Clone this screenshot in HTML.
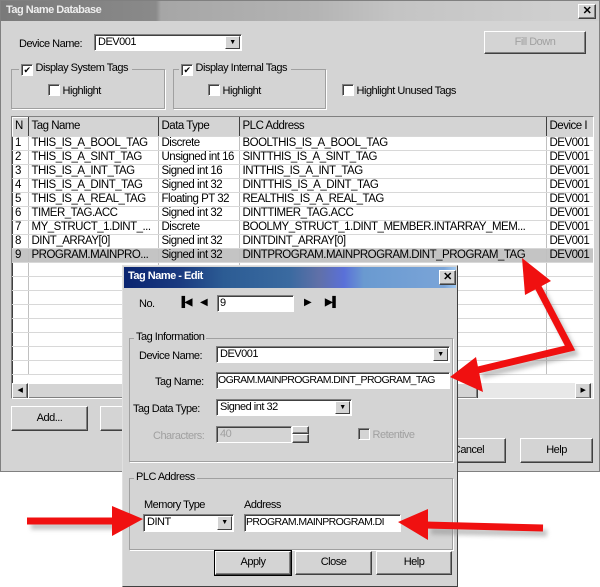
<!DOCTYPE html>
<html><head><style>
*{box-sizing:border-box;margin:0;padding:0}
body{width:600px;height:587px;background:#fff;position:relative;overflow:hidden;font-family:"Liberation Sans",sans-serif;font-size:11px;color:#000;letter-spacing:-0.5px}
.a{position:absolute}
.win{background:#d4d4d4}
.in{background:#fff;border:1px solid;border-color:#808080 #fff #fff #808080;box-shadow:inset 1px 1px 0 #404040}
.btn{background:#d4d4d4;border:1px solid;border-color:#fff #404040 #404040 #fff;box-shadow:inset -1px -1px 0 #808080;text-align:center}
.grp{border:1px solid #a0a0a0;box-shadow:1px 1px 0 #fff}
.cb{width:12px;height:12px;background:#fff;border:1px solid;border-color:#808080 #fff #fff #808080;box-shadow:inset 1px 1px 0 #404040;font-size:9px;line-height:10px;text-align:center}
.dd{position:absolute;right:1px;top:1px;bottom:1px;width:15px;background:#d4d4d4;border:1px solid;border-color:#fff #404040 #404040 #fff;font-size:7px;text-align:center;line-height:12px}
.lbl{background:#d4d4d4;padding:0 2px}
table{border-collapse:collapse}
td{height:14px;border-right:1px solid #c0c0c0;border-bottom:1px solid #d8d8d8;padding:0 3px;white-space:nowrap;overflow:hidden;font-size:11.5px;line-height:13px}
.dis{color:#a0a0a0}
</style></head><body>
<div class="a win" style="left:0;top:0;width:600px;height:472px;border:1px solid #808080">
 <div class="a" style="left:0;top:0;width:598px;height:20px;background:linear-gradient(90deg,#7a7a7a 0,#8a8a8a 155px,#a6a6a6 160px,#b4b4b4 315px,#c4c4c4 395px,#cfcfcf 555px);color:#eee;font-weight:bold;padding:3px 5px">Tag Name Database</div>
 <div class="a btn" style="left:577px;top:3px;width:18px;height:15px;font-weight:bold;line-height:12px">✕</div>
 <div class="a" style="left:18px;top:37px">Device Name:</div>
 <div class="a in" style="left:93px;top:33px;width:148px;height:17px;padding:1px 3px">DEV001<div class="dd">▼</div></div>
 <div class="a btn dis" style="left:483px;top:30px;width:102px;height:23px;line-height:20px">Fill Down</div>
 <div class="a grp" style="left:10px;top:68px;width:154px;height:40px"></div>
 <div class="a lbl" style="left:18px;top:61px;padding-right:4px"><span class="cb" style="display:inline-block;vertical-align:-2px">✔</span> Display System Tags</div>
 <div class="a" style="left:47px;top:83px"><span class="cb" style="display:inline-block;vertical-align:-2px"></span> Highlight</div>
 <div class="a grp" style="left:172px;top:68px;width:153px;height:40px"></div>
 <div class="a lbl" style="left:178px;top:61px;padding-right:4px"><span class="cb" style="display:inline-block;vertical-align:-2px">✔</span> Display Internal Tags</div>
 <div class="a" style="left:207px;top:83px"><span class="cb" style="display:inline-block;vertical-align:-2px"></span> Highlight</div>
 <div class="a" style="left:341px;top:83px"><span class="cb" style="display:inline-block;vertical-align:-2px"></span> Highlight Unused Tags</div>
 <div class="a in" style="left:10px;top:115px;width:583px;height:283px;overflow:hidden">
  <table style="width:600px;table-layout:fixed">
   <colgroup><col style="width:16px"><col style="width:130px"><col style="width:81px"><col style="width:307px"><col style="width:66px"></colgroup>
   <tr style="background:#d4d4d4"><td style="height:19px;border-right:1px solid #404040;box-shadow:inset 1px 1px 0 #fff">N</td><td style="border-right:1px solid #404040">Tag Name</td><td style="border-right:1px solid #404040">Data Type</td><td style="border-right:1px solid #404040">PLC Address</td><td>Device I</td></tr>
   <tr><td>1</td><td>THIS_IS_A_BOOL_TAG</td><td>Discrete</td><td>BOOLTHIS_IS_A_BOOL_TAG</td><td>DEV001</td></tr>
   <tr><td>2</td><td>THIS_IS_A_SINT_TAG</td><td>Unsigned int 16</td><td>SINTTHIS_IS_A_SINT_TAG</td><td>DEV001</td></tr>
   <tr><td>3</td><td>THIS_IS_A_INT_TAG</td><td>Signed int 16</td><td>INTTHIS_IS_A_INT_TAG</td><td>DEV001</td></tr>
   <tr><td>4</td><td>THIS_IS_A_DINT_TAG</td><td>Signed int 32</td><td>DINTTHIS_IS_A_DINT_TAG</td><td>DEV001</td></tr>
   <tr><td>5</td><td>THIS_IS_A_REAL_TAG</td><td>Floating PT 32</td><td>REALTHIS_IS_A_REAL_TAG</td><td>DEV001</td></tr>
   <tr><td>6</td><td>TIMER_TAG.ACC</td><td>Signed int 32</td><td>DINTTIMER_TAG.ACC</td><td>DEV001</td></tr>
   <tr><td>7</td><td>MY_STRUCT_1.DINT_...</td><td>Discrete</td><td>BOOLMY_STRUCT_1.DINT_MEMBER.INTARRAY_MEM...</td><td>DEV001</td></tr>
   <tr><td>8</td><td>DINT_ARRAY[0]</td><td>Signed int 32</td><td>DINTDINT_ARRAY[0]</td><td>DEV001</td></tr>
   <tr style="background:#c4c4c4"><td>9</td><td>PROGRAM.MAINPRO...</td><td>Signed int 32</td><td>DINTPROGRAM.MAINPROGRAM.DINT_PROGRAM_TAG</td><td>DEV001</td></tr>
   <tr><td></td><td></td><td></td><td></td><td></td></tr><tr><td></td><td></td><td></td><td></td><td></td></tr><tr><td></td><td></td><td></td><td></td><td></td></tr><tr><td></td><td></td><td></td><td></td><td></td></tr><tr><td></td><td></td><td></td><td></td><td></td></tr><tr><td></td><td></td><td></td><td></td><td></td></tr><tr><td></td><td></td><td></td><td></td><td></td></tr><tr><td></td><td></td><td></td><td></td><td></td></tr>
  </table>
  <div class="a" style="left:0;top:266px;width:581px;height:16px;background:#e8e8e8">
   <div class="a btn" style="left:0;top:0;width:16px;height:16px;font-size:7px;line-height:14px">◀</div>
   <div class="a btn" style="left:16px;top:0;width:450px;height:16px"></div>
   <div class="a btn" style="left:563px;top:0;width:16px;height:16px;font-size:7px;line-height:14px">▶</div>
  </div>
 </div>
 <div class="a btn" style="left:10px;top:405px;width:77px;height:25px;line-height:22px">Add...</div>
 <div class="a btn" style="left:99px;top:405px;width:77px;height:25px"></div>
 <div class="a btn" style="left:430px;top:437px;width:75px;height:25px;line-height:22px">Cancel</div>
 <div class="a btn" style="left:519px;top:437px;width:73px;height:25px;line-height:22px">Help</div>
</div>
<div class="a win" style="left:122px;top:265px;width:336px;height:322px;border:1px solid;border-color:#e0e0e0 #404040 #404040 #e0e0e0">
 <div class="a" style="left:1px;top:1px;width:332px;height:21px;background:linear-gradient(90deg,#0a2470 0,#1a3a80 55px,#2c5c94 100px,#3a6aa0 165px,#6070a8 195px,#5a70d8 220px,#6a9ad0 240px,#7aa4d8 320px,#a0c8f0 332px);color:#fff;font-weight:bold;padding:3px 4px">Tag Name - Edit</div>
 <div class="a btn" style="left:316px;top:4px;width:17px;height:15px;font-weight:bold;line-height:12px">✕</div>
 <div class="a" style="left:16px;top:32px">No.</div>
 <div class="a" style="left:55px;top:31px;font-size:10px;font-weight:bold">▐◀</div>
 <div class="a" style="left:77px;top:31px;font-size:10px">◀</div>
 <div class="a in" style="left:94px;top:29px;width:77px;height:17px;padding:1px 2px">9</div>
 <div class="a" style="left:181px;top:31px;font-size:10px">▶</div>
 <div class="a" style="left:202px;top:31px;font-size:10px;font-weight:bold">▶▌</div>
 <div class="a grp" style="left:6px;top:72px;width:324px;height:124px"></div>
 <div class="a lbl" style="left:11px;top:65px">Tag Information</div>
 <div class="a" style="left:16px;top:84px">Device Name:</div>
 <div class="a in" style="left:93px;top:80px;width:234px;height:17px;padding:1px 3px">DEV001<div class="dd">▼</div></div>
 <div class="a" style="left:32px;top:110px">Tag Name:</div>
 <div class="a in" style="left:93px;top:106px;width:234px;height:17px;padding:1px 1px;overflow:hidden;white-space:nowrap;font-size:10.5px;letter-spacing:-0.6px">OGRAM.MAINPROGRAM.DINT_PROGRAM_TAG</div>
 <div class="a" style="left:10px;top:137px">Tag Data Type:</div>
 <div class="a in" style="left:93px;top:133px;width:136px;height:17px;padding:1px 3px">Signed int 32<div class="dd">▼</div></div>
 <div class="a dis" style="left:30px;top:164px">Characters:</div>
 <div class="a in dis" style="left:93px;top:160px;width:76px;height:17px;padding:1px 3px;background:#d4d4d4">40</div>
 <div class="a btn" style="left:169px;top:160px;width:17px;height:8px"></div>
 <div class="a btn" style="left:169px;top:168px;width:17px;height:9px"></div>
 <div class="a dis" style="left:235px;top:162px"><span class="cb" style="display:inline-block;vertical-align:-2px;background:#d4d4d4"></span> Retentive</div>
 <div class="a grp" style="left:6px;top:212px;width:324px;height:72px"></div>
 <div class="a lbl" style="left:11px;top:205px">PLC Address</div>
 <div class="a" style="left:21px;top:233px">Memory Type</div>
 <div class="a" style="left:121px;top:233px">Address</div>
 <div class="a in" style="left:20px;top:248px;width:91px;height:18px;padding:1px 3px">DINT<div class="dd">▼</div></div>
 <div class="a in" style="left:121px;top:248px;width:157px;height:18px;padding:1px 1px;overflow:hidden;white-space:nowrap;font-size:10.5px;letter-spacing:-0.6px">PROGRAM.MAINPROGRAM.DI</div>
 <div class="a btn" style="left:92px;top:285px;width:76px;height:24px;line-height:21px;outline:1px solid #000">Apply</div>
 <div class="a btn" style="left:172px;top:285px;width:77px;height:24px;line-height:21px">Close</div>
 <div class="a btn" style="left:253px;top:285px;width:76px;height:24px;line-height:21px">Help</div>
</div>
<svg class="a" style="left:0;top:0" width="600" height="587">
 <defs><filter id="s"><feGaussianBlur stdDeviation="2"/></filter></defs>
 <g fill="none" stroke="#888" stroke-width="7" opacity="0.5" filter="url(#s)" transform="translate(4,5)">
  <polyline points="537,285 570,348 478,370"/><line x1="27" y1="521" x2="112" y2="521"/><line x1="427" y1="526" x2="543" y2="528"/>
 </g>
 <g fill="#f01010" stroke="#f01010">
  <polyline points="537,285 570,348 478,370" fill="none" stroke-width="7"/>
  <polygon points="522,258 551,281 525,295" stroke="none"/>
  <polygon points="450,377 476,357 483,392" stroke="none"/>
  <line x1="27" y1="521" x2="114" y2="521" stroke-width="7"/>
  <polygon points="143,519 112,506 112,536" stroke="none"/>
  <line x1="425" y1="525" x2="543" y2="528" stroke-width="7"/>
  <polygon points="398,522 428,509 428,540" stroke="none"/>
 </g>
</svg>
</body></html>
